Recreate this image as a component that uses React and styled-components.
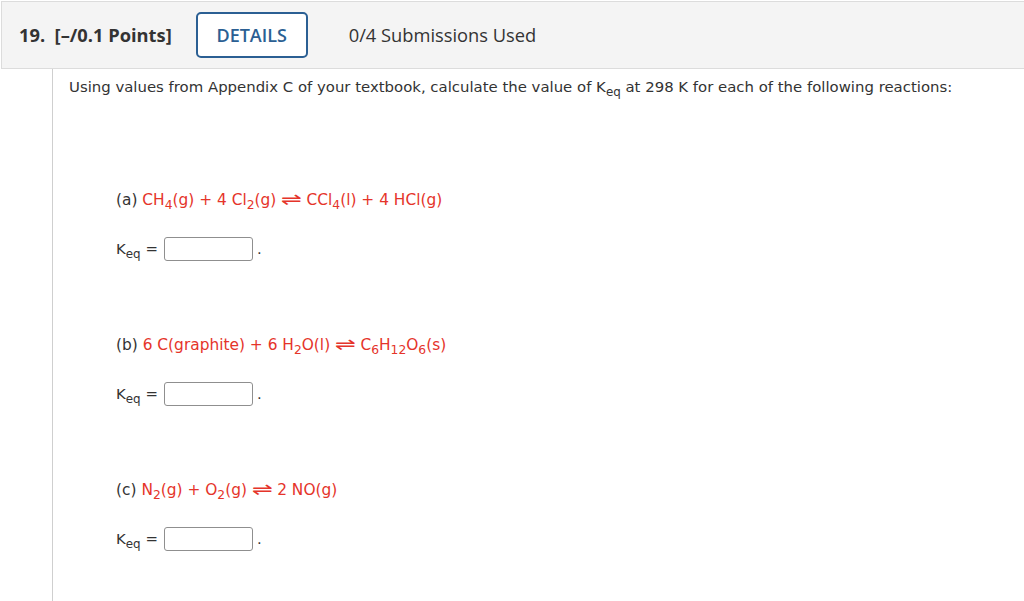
import React from "react";
import styled, { createGlobalStyle } from "styled-components";

const Global = createGlobalStyle`
  html, body { margin: 0; padding: 0; background: #fff; }
  body { width: 1024px; height: 601px; overflow: hidden; }
`;

const Page = styled.div`
  padding: 1px 0 0 1px;
`;

const Header = styled.div`
  display: flex;
  align-items: center;
  box-sizing: content-box;
  height: 65px;
  padding-bottom: 1px;
  padding-left: 17px;
  background: #f4f4f4;
  border: 1px solid #dcdcdc;
  border-right: none;
  font-family: "Open Sans", sans-serif;
  font-size: 18.3px;
  color: #333;
`;

const QNum = styled.span`
  font-weight: 700;
  margin-right: 24px;
`;

const DetailsButton = styled.div`
  box-sizing: border-box;
  width: 112px;
  height: 46px;
  border: 2px solid #2b5f93;
  border-radius: 5px;
  display: flex;
  align-items: center;
  justify-content: center;
  color: #2b5f93;
  font-weight: 600;
  font-size: 18px;
  background: #fff;
  margin-right: 41px;
`;

const Submissions = styled.span`
  color: #333;
`;

const Body = styled.div`
  margin-left: 51px;
  border-left: 1px solid #cfcfcf;
  height: 540px;
  padding: 8px 0 0 16px;
  font-family: "DejaVu Sans", Verdana, sans-serif;
  font-size: 14.9px;
  color: #333;
`;

const Intro = styled.p`
  margin: 0;
  line-height: 20px;
`;

const Sub = styled.sub`
  font-size: 0.8em;
  vertical-align: -0.35em;
  line-height: 0;
`;

const Parts = styled.div`
  padding-left: 47px;
  padding-top: 92px;
  display: flex;
  flex-direction: column;
`;

const Part = styled.div`
  margin-bottom: ${(p) => (p.$last ? 0 : 72)}px;
`;

const Reaction = styled.div`
  font-size: 15.4px;
  line-height: 20px;
  height: 20px;
  margin-bottom: 27px;
  white-space: nowrap;
`;

const Red = styled.span`
  color: #e5342a;
`;

const Arrow = styled.span`
  display: inline-block;
  font-size: 1.12em;
  line-height: 20px;
  transform: scaleX(1.45);
  margin: 0 3px;
`;

const AnswerRow = styled.div`
  display: flex;
  align-items: center;
  height: 26px;
`;

const Label = styled.span`
  display: flex;
  justify-content: space-between;
  width: 42px;
  margin-right: 6px;
`;

const Input = styled.input`
  box-sizing: border-box;
  width: 89px;
  height: 24px;
  border: 1px solid #8f8f8f;
  border-radius: 3px;
  background: #fff;
  margin: 0;
  padding: 0;
`;

const Dot = styled.span`
  margin-left: 4px;
`;

const K = () => (
  <span>
    K<Sub>eq</Sub>
  </span>
);

const parts = [
  {
    label: "(a)",
    eq: (
      <>
        CH<Sub>4</Sub>(g) + 4 Cl<Sub>2</Sub>(g) <Arrow>⇌</Arrow> CCl<Sub>4</Sub>(l) + 4 HCl(g)
      </>
    ),
  },
  {
    label: "(b)",
    eq: (
      <>
        6 C(graphite) + 6 H<Sub>2</Sub>O(l) <Arrow>⇌</Arrow> C<Sub>6</Sub>H<Sub>12</Sub>O<Sub>6</Sub>(s)
      </>
    ),
  },
  {
    label: "(c)",
    eq: (
      <>
        N<Sub>2</Sub>(g) + O<Sub>2</Sub>(g) <Arrow>⇌</Arrow> 2 NO(g)
      </>
    ),
  },
];

export default function App() {
  return (
    <Page>
      <Global />
      <Header>
        <QNum>19.&nbsp; [–/0.1 Points]</QNum>
        <DetailsButton>DETAILS</DetailsButton>
        <Submissions>0/4 Submissions Used</Submissions>
      </Header>
      <Body>
        <Intro>
          Using values from Appendix C of your textbook, calculate the value of <K /> at 298 K for each of the following reactions:
        </Intro>
        <Parts>
          {parts.map((p, i) => (
            <Part key={i} $last={i === parts.length - 1}>
              <Reaction>
                {p.label} <Red>{p.eq}</Red>
              </Reaction>
              <AnswerRow>
                <Label>
                  <K />
                  <span>=</span>
                </Label>
                <Input type="text" />
                <Dot>.</Dot>
              </AnswerRow>
            </Part>
          ))}
        </Parts>
      </Body>
    </Page>
  );
}
